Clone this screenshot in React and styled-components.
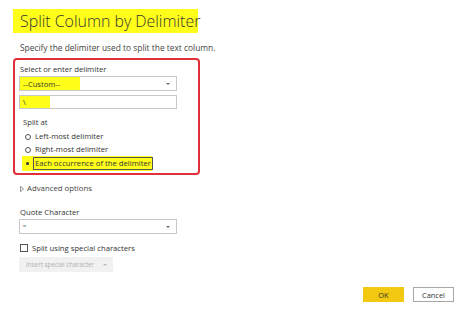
import React from "react";
import styled, { createGlobalStyle } from "styled-components";

const GlobalStyle = createGlobalStyle`
  html, body {
    margin: 0;
    padding: 0;
    background: #fff;
  }
  body {
    font-family: "Open Sans", "Noto Sans", sans-serif;
    color: #333;
  }
`;

const Dialog = styled.div`
  width: 474px;
  height: 322px;
  box-sizing: border-box;
  padding: 9px 20px 0 13px;
  display: flex;
  flex-direction: column;
`;

const Title = styled.h1`
  align-self: flex-start;
  margin: 0;
  padding: 0 5px 0 7px;
  height: 24px;
  line-height: 24px;
  width: 173px;
  background: #ffff1a;
  font-size: 15.9px;
  font-weight: 300;
  color: #333;
  white-space: nowrap;
`;

const Intro = styled.p`
  margin: 9px 0 0 7px;
  font-size: 8.4px;
  line-height: 12px;
  color: #444;
  white-space: nowrap;
`;

const Outlined = styled.div`
  margin-top: 4px;
  width: 187px;
  height: 117px;
  box-sizing: border-box;
  border: 2px solid #e0313b;
  border-radius: 4px;
  padding: 4px 0 0 4px;
  display: flex;
  flex-direction: column;
`;

const Label = styled.div`
  font-size: 7.7px;
  line-height: 11px;
  color: #333;
  margin-left: ${(p) => p.$indent || 1}px;
  margin-top: ${(p) => p.$top || 0}px;
  white-space: nowrap;
`;

const Field = styled.div`
  position: relative;
  margin-top: ${(p) => p.$top || 0}px;
  width: 158px;
  height: ${(p) => p.$h || 15}px;
  box-sizing: border-box;
  border: 1px solid #c8c8c8;
  background: #fff;
  display: flex;
  align-items: center;
`;

const Mark = styled.span`
  align-self: stretch;
  display: flex;
  align-items: center;
  width: ${(p) => p.$w}px;
  box-sizing: border-box;
  padding-left: 3px;
  background: #ffff1a;
  font-size: 7.6px;
  color: #333;
  white-space: nowrap;
`;

const Plain = styled.span`
  padding-left: 3px;
  font-size: 7.6px;
  color: #333;
`;

const Caret = styled.span`
  position: absolute;
  right: 6px;
  top: 50%;
  margin-top: -1px;
  width: 0;
  height: 0;
  border-left: 2px solid transparent;
  border-right: 2px solid transparent;
  border-top: 2px solid ${(p) => p.$color || "#666"};
`;

const RadioRow = styled.div`
  display: flex;
  align-items: center;
  height: ${(p) => (p.$marked ? 15 : 13)}px;
  margin-top: ${(p) => p.$top || 0}px;
  margin-left: 3px;
  padding-left: 3px;
  width: ${(p) => (p.$marked ? 130 : "auto")}px;
  box-sizing: border-box;
  background: ${(p) => (p.$marked ? "#ffff1a" : "transparent")};
`;

const Radio = styled.span`
  width: 6px;
  height: 6px;
  box-sizing: border-box;
  border-radius: 50%;
  border: ${(p) => (p.$on ? "none" : "1px solid #555")};
  background: transparent;
  display: flex;
  align-items: center;
  justify-content: center;
  &::after {
    content: "";
    display: ${(p) => (p.$on ? "block" : "none")};
    width: 3px;
    height: 3px;
    border-radius: 50%;
    background: #333;
  }
`;

const RadioText = styled.span`
  margin-left: 3px;
  font-size: 7.7px;
  line-height: 11px;
  color: #333;
  white-space: nowrap;
  padding: 0 1px;
  outline: ${(p) => (p.$focus ? "1px solid #555" : "none")};
`;

const Expander = styled.div`
  display: flex;
  align-items: center;
  margin: 8px 0 0 7px;
  font-size: 7.8px;
  line-height: 11px;
  color: #444;
  svg {
    margin-right: 3px;
  }
`;

const Section = styled.div`
  display: flex;
  flex-direction: column;
  margin-left: 6px;
  margin-top: ${(p) => p.$top || 0}px;
`;

const CheckRow = styled.div`
  display: flex;
  align-items: center;
  height: 12px;
  margin: 8px 0 0 1px;
  font-size: 7.7px;
  color: #333;
  white-space: nowrap;
`;

const Box = styled.span`
  width: 8px;
  height: 8px;
  box-sizing: border-box;
  border: 1px solid #555;
  margin-right: 4px;
`;

const InsertButton = styled.div`
  position: relative;
  margin-top: 3px;
  width: 94px;
  height: 15px;
  background: #f1f1f1;
  color: #b0b0b0;
  font-size: 6.3px;
  display: flex;
  align-items: center;
  padding-left: 7px;
  box-sizing: border-box;
  white-space: nowrap;
`;

const Footer = styled.div`
  display: flex;
  justify-content: flex-end;
  gap: 9px;
  margin-top: 15px;
`;

const Button = styled.div`
  width: 41px;
  height: 15px;
  box-sizing: border-box;
  display: flex;
  align-items: center;
  justify-content: center;
  font-size: 7.4px;
  color: #333;
  background: ${(p) => (p.$primary ? "#f2c811" : "#fff")};
  border: 1px solid ${(p) => (p.$primary ? "#f2c811" : "#a8a8a8")};
`;

export default function App() {
  return (
    <>
      <GlobalStyle />
      <Dialog>
        <Title>Split Column by Delimiter</Title>
        <Intro>Specify the delimiter used to split the text column.</Intro>

        <Outlined>
          <Label>Select or enter delimiter</Label>
          <Field $top={1}>
            <Mark $w={60}>--Custom--</Mark>
            <Caret />
          </Field>
          <Field $top={4} $h={14}>
            <Mark $w={30}>\</Mark>
          </Field>
          <Label $indent={4} $top={8}>Split at</Label>
          <RadioRow $top={2}>
            <Radio />
            <RadioText>Left-most delimiter</RadioText>
          </RadioRow>
          <RadioRow>
            <Radio />
            <RadioText>Right-most delimiter</RadioText>
          </RadioRow>
          <RadioRow $marked $top={0}>
            <Radio $on />
            <RadioText $focus>Each occurrence of the delimiter</RadioText>
          </RadioRow>
        </Outlined>

        <Expander>
          <svg width="4" height="6" viewBox="0 0 4 6">
            <path d="M0.5 0.5 L3.5 3 L0.5 5.5 Z" fill="none" stroke="#777" strokeWidth="0.8" />
          </svg>
          Advanced options
        </Expander>

        <Section $top={13}>
          <Label>Quote Character</Label>
          <Field $top={1}>
            <Plain>"</Plain>
            <Caret />
          </Field>
          <CheckRow>
            <Box />
            Split using special characters
          </CheckRow>
          <InsertButton>
            Insert special character
            <Caret $color="#bbb" />
          </InsertButton>
        </Section>

        <Footer>
          <Button $primary>OK</Button>
          <Button>Cancel</Button>
        </Footer>
      </Dialog>
    </>
  );
}
